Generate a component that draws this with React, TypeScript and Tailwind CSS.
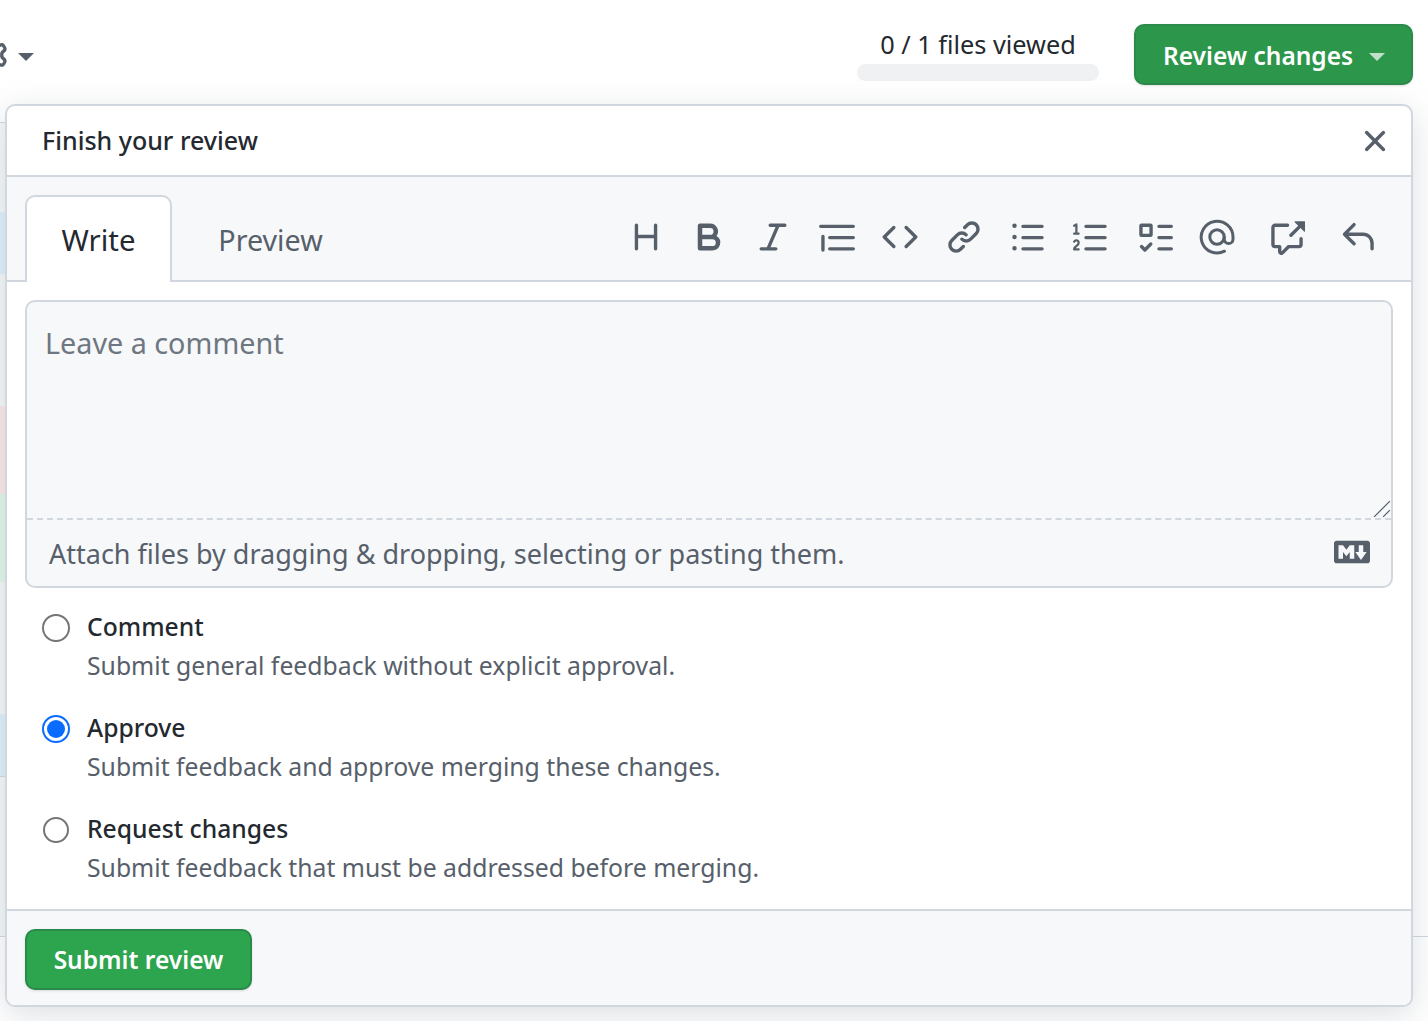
const icons: Record<string, string> = {
  gear: 'M8 0a8.2 8.2 0 0 1 .701.031C9.444.095 9.99.645 10.16 1.29l.288 1.107c.018.066.079.158.212.224.231.114.454.243.668.386.123.082.233.09.299.071l1.103-.303c.644-.176 1.392.021 1.82.63.27.385.506.792.704 1.218.315.675.111 1.422-.364 1.891l-.814.806c-.049.048-.098.147-.088.294.016.257.016.515 0 .772-.01.147.038.246.088.294l.814.806c.475.469.679 1.216.364 1.891a7.977 7.977 0 0 1-.704 1.217c-.428.61-1.176.807-1.82.63l-1.102-.302c-.067-.019-.177-.011-.3.071a5.909 5.909 0 0 1-.668.386c-.133.066-.194.158-.211.224l-.29 1.106c-.168.646-.715 1.196-1.458 1.26a8.006 8.006 0 0 1-1.402 0c-.743-.064-1.289-.614-1.458-1.26l-.289-1.106c-.018-.066-.079-.158-.212-.224a5.738 5.738 0 0 1-.668-.386c-.123-.082-.233-.09-.299-.071l-1.103.303c-.644.176-1.392-.021-1.82-.63a8.12 8.12 0 0 1-.704-1.218c-.315-.675-.111-1.422.363-1.891l.815-.806c.05-.048.098-.147.088-.294a6.214 6.214 0 0 1 0-.772c.01-.147-.038-.246-.088-.294l-.815-.806C.635 6.045.431 5.298.746 4.623a7.92 7.92 0 0 1 .704-1.217c.428-.61 1.176-.807 1.82-.63l1.102.302c.067.019.177.011.3-.071.214-.143.437-.272.668-.386.133-.066.194-.158.211-.224l.29-1.106C6.009.645 6.556.095 7.299.03 7.53.01 7.765 0 8 0Zm-.571 1.525c-.036.003-.108.036-.137.146l-.289 1.105c-.147.561-.549.967-.998 1.189-.173.086-.34.183-.5.29-.417.278-.97.423-1.529.27l-1.103-.303c-.109-.03-.175.016-.195.045-.22.312-.412.644-.573.99-.014.031-.021.11.059.19l.815.806c.411.406.562.957.53 1.456a4.709 4.709 0 0 0 0 .582c.032.499-.119 1.05-.53 1.456l-.815.806c-.081.08-.073.159-.059.19.162.346.353.677.573.989.02.03.085.076.195.046l1.102-.303c.56-.153 1.113-.008 1.53.27.161.107.328.204.501.29.447.222.85.629.997 1.189l.289 1.105c.029.109.101.143.137.146a6.6 6.6 0 0 0 1.142 0c.036-.003.108-.036.137-.146l.289-1.105c.147-.561.549-.967.998-1.189.173-.086.34-.183.5-.29.417-.278.97-.423 1.529-.27l1.103.303c.109.029.175-.016.195-.045.22-.313.411-.644.573-.99.014-.031.021-.11-.059-.19l-.815-.806c-.411-.406-.562-.957-.53-1.456a4.709 4.709 0 0 0 0-.582c-.032-.499.119-1.05.53-1.456l.815-.806c.081-.08.073-.159.059-.19a6.464 6.464 0 0 0-.573-.989c-.02-.03-.085-.076-.195-.046l-1.102.303c-.56.153-1.113.008-1.53-.27a4.44 4.44 0 0 0-.501-.29c-.447-.222-.85-.629-.997-1.189l-.289-1.105c-.029-.11-.101-.143-.137-.146a6.6 6.6 0 0 0-1.142 0ZM11 8a3 3 0 1 1-6 0 3 3 0 0 1 6 0ZM9.5 8a1.5 1.5 0 1 0-3.001.001A1.5 1.5 0 0 0 9.5 8Z',
  heading: 'M3.75 2a.75.75 0 0 1 .75.75V7h7V2.75a.75.75 0 0 1 1.5 0v10.5a.75.75 0 0 1-1.5 0V8.5h-7v4.75a.75.75 0 0 1-1.5 0V2.75A.75.75 0 0 1 3.75 2Z',
  bold: 'M4 2h4.5a3.501 3.501 0 0 1 2.852 5.53A3.499 3.499 0 0 1 9.5 14H4a1 1 0 0 1-1-1V3a1 1 0 0 1 1-1Zm1 7v3h4.5a1.5 1.5 0 0 0 0-3Zm3.5-2a1.5 1.5 0 0 0 0-3H5v3Z',
  italic: 'M6 2.75A.75.75 0 0 1 6.75 2h6.5a.75.75 0 0 1 0 1.5h-2.505l-3.858 9H9.25a.75.75 0 0 1 0 1.5h-6.5a.75.75 0 0 1 0-1.5h2.505l3.858-9H6.75A.75.75 0 0 1 6 2.75Z',
  quote: 'M.75 2.5h14.5a.75.75 0 0 1 0 1.5H.75a.75.75 0 0 1 0-1.5Zm4 5h10.5a.75.75 0 0 1 0 1.5H4.75a.75.75 0 0 1 0-1.5Zm0 5h10.5a.75.75 0 0 1 0 1.5H4.75a.75.75 0 0 1 0-1.5ZM2.5 7.75v6a.75.75 0 0 1-1.5 0v-6a.75.75 0 0 1 1.5 0Z',
  code: 'm11.28 3.22 4.25 4.25a.75.75 0 0 1 0 1.06l-4.25 4.25a.749.749 0 0 1-1.275-.326.749.749 0 0 1 .215-.734L13.94 8l-3.72-3.72a.749.749 0 0 1 .326-1.275.749.749 0 0 1 .734.215Zm-6.56 0a.751.751 0 0 1 1.042.018.751.751 0 0 1 .018 1.042L2.06 8l3.72 3.72a.749.749 0 0 1-.326 1.275.749.749 0 0 1-.734-.215L.47 8.53a.75.75 0 0 1 0-1.06Z',
  link: 'm7.775 3.275 1.25-1.25a3.5 3.5 0 1 1 4.95 4.95l-2.5 2.5a3.5 3.5 0 0 1-4.95 0 .751.751 0 0 1 .018-1.042.751.751 0 0 1 1.042-.018 1.998 1.998 0 0 0 2.83 0l2.5-2.5a2.002 2.002 0 0 0-2.83-2.83l-1.25 1.25a.751.751 0 0 1-1.042-.018.751.751 0 0 1-.018-1.042Zm-4.69 9.64a1.998 1.998 0 0 0 2.83 0l1.25-1.25a.751.751 0 0 1 1.042.018.751.751 0 0 1 .018 1.042l-1.25 1.25a3.5 3.5 0 1 1-4.95-4.95l2.5-2.5a3.5 3.5 0 0 1 4.95 0 .751.751 0 0 1-.018 1.042.751.751 0 0 1-1.042.018 1.998 1.998 0 0 0-2.83 0l-2.5 2.5a1.998 1.998 0 0 0 0 2.83Z',
  ul: 'M5.75 2.5h8.5a.75.75 0 0 1 0 1.5h-8.5a.75.75 0 0 1 0-1.5Zm0 5h8.5a.75.75 0 0 1 0 1.5h-8.5a.75.75 0 0 1 0-1.5Zm0 5h8.5a.75.75 0 0 1 0 1.5h-8.5a.75.75 0 0 1 0-1.5ZM2 14a1 1 0 1 1 0-2 1 1 0 0 1 0 2Zm1-6a1 1 0 1 1-2 0 1 1 0 0 1 2 0ZM2 4a1 1 0 1 1 0-2 1 1 0 0 1 0 2Z',
  ol: 'M5 3.25a.75.75 0 0 1 .75-.75h8.5a.75.75 0 0 1 0 1.5h-8.5A.75.75 0 0 1 5 3.25Zm0 5a.75.75 0 0 1 .75-.75h8.5a.75.75 0 0 1 0 1.5h-8.5A.75.75 0 0 1 5 8.25Zm0 5a.75.75 0 0 1 .75-.75h8.5a.75.75 0 0 1 0 1.5h-8.5a.75.75 0 0 1-.75-.75ZM.924 10.32a.5.5 0 0 1-.851-.525l.001-.001.001-.002.002-.004.007-.011c.097-.144.215-.273.348-.384.228-.19.588-.392 1.068-.392.468 0 .858.181 1.126.484.259.294.377.673.377 1.038 0 .987-.686 1.495-1.156 1.845l-.047.035c-.303.225-.522.4-.654.597h1.357a.5.5 0 0 1 0 1H.5a.5.5 0 0 1-.5-.5c0-1.005.692-1.52 1.167-1.875l.035-.025c.531-.396.8-.625.8-1.078a.57.57 0 0 0-.128-.376C1.806 10.068 1.695 10 1.5 10a.658.658 0 0 0-.429.163.835.835 0 0 0-.144.153ZM2.003 2.5V6h.503a.5.5 0 0 1 0 1H.5a.5.5 0 0 1 0-1h.503V3.308l-.28.14a.5.5 0 0 1-.446-.895l1.003-.5a.5.5 0 0 1 .723.447Z',
  tasks: 'M2 2h4a1 1 0 0 1 1 1v4a1 1 0 0 1-1 1H2a1 1 0 0 1-1-1V3a1 1 0 0 1 1-1Zm4.655 8.595a.75.75 0 0 1 0 1.06L4.03 14.28a.75.75 0 0 1-1.06 0l-1.5-1.5a.749.749 0 0 1 .326-1.275.749.749 0 0 1 .734.215l.97.97 2.095-2.095a.75.75 0 0 1 1.06 0ZM9.75 2.5h5.5a.75.75 0 0 1 0 1.5h-5.5a.75.75 0 0 1 0-1.5Zm0 5h5.5a.75.75 0 0 1 0 1.5h-5.5a.75.75 0 0 1 0-1.5Zm0 5h5.5a.75.75 0 0 1 0 1.5h-5.5a.75.75 0 0 1 0-1.5Zm-7.25-9v3h3v-3Z',
  crossRef: 'M2.75 3.5c-.138 0-.25.112-.25.25v7.5c0 .138.112.25.25.25h2a.75.75 0 0 1 .75.75v2.19l2.72-2.72a.749.749 0 0 1 .53-.22h4.5a.25.25 0 0 0 .25-.25v-2.5a.75.75 0 0 1 1.5 0v2.5A1.75 1.75 0 0 1 13.25 13H9.06l-2.573 2.573A1.458 1.458 0 0 1 4 14.543V13H2.75A1.75 1.75 0 0 1 1 11.25v-7.5C1 2.784 1.784 2 2.75 2h5.5a.75.75 0 0 1 0 1.5ZM16 1.25v4.146a.25.25 0 0 1-.427.177L14.03 4.03l-3.75 3.75a.749.749 0 0 1-1.275-.326.749.749 0 0 1 .215-.734l3.75-3.75-1.543-1.543A.25.25 0 0 1 11.604 1h4.146a.25.25 0 0 1 .25.25Z',
  reply: 'M6.78 1.97a.75.75 0 0 1 0 1.06L3.81 6h6.44A4.75 4.75 0 0 1 15 10.75v2.5a.75.75 0 0 1-1.5 0v-2.5a3.25 3.25 0 0 0-3.25-3.25H3.81l2.97 2.97a.749.749 0 0 1-.326 1.275.749.749 0 0 1-.734-.215L1.47 7.28a.75.75 0 0 1 0-1.06l4.25-4.25a.75.75 0 0 1 1.06 0Z',
  markdown: 'M14.85 3c.63 0 1.15.52 1.14 1.15v7.7c0 .63-.51 1.15-1.15 1.15H1.15C.52 13 0 12.48 0 11.84V4.15C0 3.52.52 3 1.15 3ZM9 11V5H7L5.5 7 4 5H2v6h2V8l1.5 1.92L7 8v3Zm2.99.5L14.5 8H13V5h-2v3H9.5Z',
  x: 'M3.72 3.72a.75.75 0 0 1 1.06 0L8 6.94l3.22-3.22a.749.749 0 0 1 1.275.326.749.749 0 0 1-.215.734L9.06 8l3.22 3.22a.749.749 0 0 1-.326 1.275.749.749 0 0 1-.734-.215L8 9.06l-3.22 3.22a.751.751 0 0 1-1.042-.018.751.751 0 0 1-.018-1.042L6.94 8 3.72 4.78a.75.75 0 0 1 0-1.06Z',
}

function Octicon({ name, className }: { name: string; className: string }) {
  return (
    <svg viewBox="0 0 16 16" fill="currentColor" fillRule="evenodd" className={className}>
      <path d={icons[name]} />
    </svg>
  )
}

function Mention() {
  return (
    <svg viewBox="0 0 36 36" fill="none" stroke="currentColor" strokeWidth="3" strokeLinecap="round" className="h-[36px] w-[36px]">
      <path d="M25.5 32.2A15.9 15.9 0 1 1 34 18v2.2a4.4 4.4 0 0 1-8.8 0V18" />
      <circle cx="18" cy="18" r="7.2" />
    </svg>
  )
}

const toolbar = ['heading', 'bold', 'italic', 'quote', 'code', 'link', 'ul', 'ol', 'tasks']

const options = [
  { title: 'Comment', desc: 'Submit general feedback without explicit approval.' },
  { title: 'Approve', desc: 'Submit feedback and approve merging these changes.', checked: true },
  { title: 'Request changes', desc: 'Submit feedback that must be addressed before merging.', small: true },
]

export default function App() {
  return (
    <div className="relative h-[1021px] w-[1428px] overflow-hidden bg-white font-['Noto_Sans',sans-serif] text-[#24292f]">
      {/* diff showing through at the edges */}
      <div className="absolute left-0 top-[122px] h-[814px] w-[6px] bg-[#f6f8f8]" />
      <div className="absolute left-0 top-[122px] h-[1px] w-[6px] bg-[#d0d7de]" />
      <div className="absolute left-0 top-[212px] h-[62px] w-[6px] bg-[#ddf1fb]" />
      <div className="absolute left-0 top-[406px] h-[88px] w-[6px] bg-[#fde8e6]" />
      <div className="absolute left-0 top-[494px] h-[88px] w-[6px] bg-[#e0f8e6]" />
      <div className="absolute left-0 top-[714px] h-[62px] w-[6px] bg-[#ddf1fb]" />
      <div className="absolute left-0 top-[776px] h-[1px] w-[6px] bg-[#d0d7de]" />
      <div className="absolute left-0 top-[936px] h-[1px] w-[6px] bg-[#d0d7de]" />
      <div className="absolute right-0 top-[936px] h-[1px] w-[15px] bg-[#d0d7de]" />

      {/* top bar */}
      <div className="relative flex h-[104px] items-start bg-white">
        <div className="mt-[37px] flex items-center text-[#57606a]">
          <Octicon name="gear" className="ml-[-28px] h-[36px] w-[36px] shrink-0" />
          <span className="ml-[10px] mt-[4px] h-0 w-0 border-x-[8px] border-t-[8px] border-x-transparent border-t-[#57606a]" />
        </div>
        <div className="ml-auto mt-[24px] flex items-start">
          <div className="mr-[35px] flex w-[242px] flex-col items-center">
            <span className="text-[25.3px] leading-[40px] text-[#24292f]">0 / 1 files viewed</span>
            <div className="h-[17px] w-full rounded-full bg-[#eff1f3]" />
          </div>
          <button className="mr-[15px] flex h-[61px] w-[279px] items-center rounded-[10px] border-2 border-[#2a8a4a] bg-[#2c974b] pl-[27px] pt-[4px] text-[24.5px] font-semibold text-white shadow-sm">
            Review changes
            <span className="ml-[16px] h-0 w-0 border-x-[8px] border-t-[8px] border-x-transparent border-t-[#c0e0c9]" />
          </button>
        </div>
      </div>

      {/* review dialog */}
      <div className="relative ml-[5px] flex h-[903px] w-[1408px] flex-col overflow-hidden rounded-[10px] border-2 border-[#d0d7de] bg-white shadow-[0_8px_32px_rgba(140,149,159,0.3)]">
        <div className="flex h-[71px] shrink-0 items-center justify-between border-b-2 border-[#d0d7de] pl-[35px] pr-[18px]">
          <h2 className="text-[25px] font-medium">Finish your review</h2>
          <Octicon name="x" className="h-[36px] w-[36px] text-[#57606a]" />
        </div>

        <div className="flex h-[105px] shrink-0 items-end bg-[#f6f8fa] pl-[18px]">
          <div className="relative w-full">
            <div className="absolute bottom-0 left-[-18px] right-0 h-[2px] bg-[#d0d7de]" />
            <div className="flex items-end">
              <div className="relative flex h-[87px] w-[147px] items-center justify-center rounded-t-[10px] border-2 border-b-0 border-[#d0d7de] bg-white pt-[2px] text-[29.4px] text-[#24292f]">
                Write
              </div>
              <div className="flex h-[87px] w-[197px] items-center justify-center pt-[2px] text-[28.7px] text-[#57606a]">Preview</div>
              <div className="absolute right-[22px] top-[24px] flex items-center text-[#57606a]">
                {toolbar.map(name => (
                  <span key={name} className="flex w-[63.7px] justify-center">
                    <Octicon name={name} className="h-[36px] w-[36px] shrink-0" />
                  </span>
                ))}
                <span className="flex w-[60px] justify-center"><Mention /></span>
                <span className="flex w-[80px] justify-center"><Octicon name="crossRef" className="h-[36px] w-[36px]" /></span>
                <span className="flex w-[62px] justify-center"><Octicon name="reply" className="h-[36px] w-[36px]" /></span>
              </div>
            </div>
          </div>
        </div>

        <div className="shrink-0 bg-white px-[18px] pt-[18px]">
          <div className="h-[288px] rounded-[10px] border-2 border-[#d0d7de] bg-[#f6f8fa]">
            <div className="relative h-[218px] border-b-2 border-dashed border-[#d0d7de] pl-[18px] pt-[20px] text-[28.75px] leading-[42px] text-[#6e7781]">
              Leave a comment
              <svg viewBox="0 0 16 16" className="absolute bottom-0 right-0 h-[18px] w-[18px]" stroke="#57606a" strokeWidth="1.1" fill="none">
                <path d="M1 15 15 1M9 15l6-6" />
              </svg>
            </div>
            <div className="flex h-[66px] items-center justify-between pl-[22px] pr-[21px] pt-[2px] text-[27px] text-[#57606a]">
              <span>Attach files by dragging &amp; dropping, selecting or pasting them.</span>
              <Octicon name="markdown" className="mb-[4px] h-[36px] w-[36px]" />
            </div>
          </div>
        </div>

        <div className="flex-1 bg-white pl-[35px] pt-[3px]">
          {options.map(o => (
            <div key={o.title} className="flex h-[101px] items-start">
              {o.checked ? (
                <span className="mt-[23px] flex h-[28px] w-[28px] items-center justify-center rounded-full border-2 border-[#0a6cff] bg-white">
                  <span className="h-[18px] w-[18px] rounded-full bg-[#0a6cff]" />
                </span>
              ) : o.small ? (
                <span className="ml-[1px] mr-[1px] mt-[24px] h-[26px] w-[26px] rounded-full border-2 border-[#767676] bg-white" />
              ) : (
                <span className="mt-[23px] h-[28px] w-[28px] rounded-full border-2 border-[#767676] bg-white" />
              )}
              <div className="ml-[17px] pt-[19px]">
                <div className="text-[24.7px] font-medium leading-[34px] text-[#24292f]">{o.title}</div>
                <div className="mt-[5px] text-[24.75px] leading-[34px] text-[#57606a]">{o.desc}</div>
              </div>
            </div>
          ))}
        </div>

        <div className="flex h-[96px] shrink-0 items-start border-t-2 border-[#d0d7de] bg-[#f6f8fa] pl-[18px] pt-[18px]">
          <button className="flex h-[61px] w-[227px] items-center justify-center rounded-[10px] border-2 border-[#2a8a4a] bg-[#2da44e] pt-[1px] text-[24.5px] font-semibold text-white shadow-sm">
            Submit review
          </button>
        </div>
      </div>
    </div>
  )
}
